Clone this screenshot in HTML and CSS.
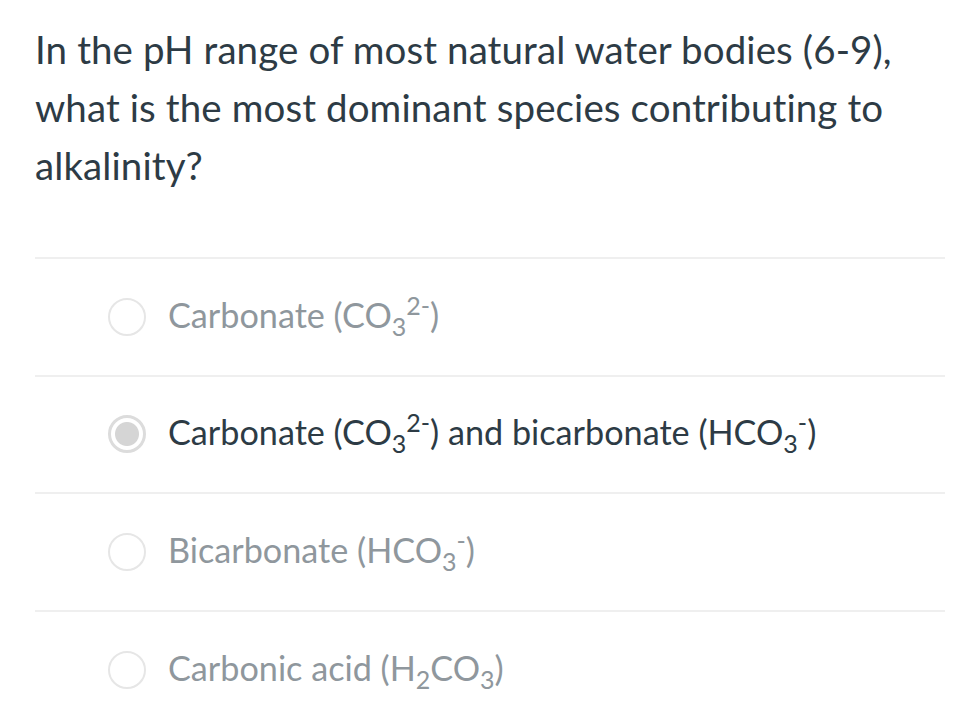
FILE: index.html
```html
<!DOCTYPE html>
<html>
<head>
<meta charset="utf-8">
<link rel="stylesheet" href="styles.css">
</head>
<body>
<div class="quiz">
  <p class="question">In the pH range of most natural water bodies (6-9), what is the most dominant species contributing to alkalinity?</p>
  <div class="answers">
    <div class="answer">
      <span class="radio"></span>
      <span class="label">Carbonate (CO<sub>3</sub><sup>2-</sup>)</span>
    </div>
    <div class="answer selected">
      <span class="radio"></span>
      <span class="label">Carbonate (CO<sub>3</sub><sup>2-</sup>) and bicarbonate (HCO<sub>3</sub><sup>-</sup>)</span>
    </div>
    <div class="answer">
      <span class="radio"></span>
      <span class="label">Bicarbonate (HCO<sub>3</sub><sup>-</sup>)</span>
    </div>
    <div class="answer">
      <span class="radio"></span>
      <span class="label">Carbonic acid (H<sub>2</sub>CO<sub>3</sub>)</span>
    </div>
  </div>
</div>
</body>
</html>
```
FILE: styles.css
```css
html, body {
  margin: 0;
  padding: 0;
  background: #ffffff;
}
body {
  font-family: Lato, "Noto Sans", sans-serif;
  color: #2d3b45;
}
.quiz {
  padding: 20px 14px 0 35px;
}
.question {
  margin: 0;
  font-size: 38.5px;
  line-height: 58px;
  letter-spacing: 0.1px;
  width: 900px;
}
.answers {
  margin-top: 63px;
  display: flex;
  flex-direction: column;
}
.answer {
  box-sizing: border-box;
  height: 117.67px;
  border-top: 2px solid #efefef;
  display: flex;
  align-items: center;
  padding-left: 73px;
  gap: 22px;
  color: #8f979d;
}
.answer.selected {
  color: #2d3b45;
}
.radio {
  box-sizing: border-box;
  width: 38px;
  height: 38px;
  border-radius: 50%;
  border: 2px solid #e6e6e6;
  background: #ffffff;
  flex: none;
}
.selected .radio {
  border: 3px solid #dcdcdc;
  background: radial-gradient(circle, #d5d5d5 0 11.5px, #ffffff 12.5px);
}
.label {
  font-size: 34.2px;
  line-height: 40px;
  position: relative;
  top: -2px;
}
.label sub,
.label sup {
  font-size: 25px;
  line-height: 0;
  position: relative;
  vertical-align: baseline;
}
.label sub {
  top: 8px;
}
.label sup {
  top: -13px;
}
```
